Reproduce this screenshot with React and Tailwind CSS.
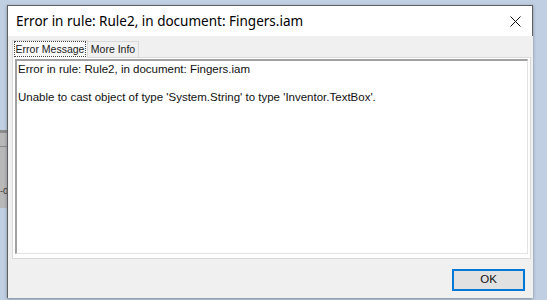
export default function App() {
  return (
    <div className="relative w-[547px] h-[300px] overflow-hidden bg-[#c0cfe2]" style={{ fontFamily: '"Noto Sans", sans-serif' }}>
      {/* background app behind dialog */}
      <div className="absolute left-0 top-[130px] w-[14px] h-[78px] bg-[#b8b8b8] border-t-[3px] border-[#8c8c8c]">
        <div className="mt-[13px] h-px bg-[#8a8a8a]" />
        <div className="mt-[40px] whitespace-nowrap text-[9px] leading-none text-[#333]" style={{ fontFamily: '"Liberation Sans", sans-serif' }}>-0</div>
      </div>
      <div className="absolute left-[7px] top-[5px] w-[526px] h-[293px] flex flex-col shadow-[0_1px_3px_rgba(60,70,90,0.5)]">
        {/* title bar */}
        <div className="h-[31px] w-[526px] bg-white border-l border-t border-r border-[#5f5f5f] flex items-center pl-[8px] pr-[11px]">
          <span className="text-[13.5px] text-black whitespace-nowrap mt-[1px]" style={{ fontFamily: '"Noto Sans", "Open Sans", sans-serif' }}>
            Error in rule: Rule2, in document: Fingers.iam
          </span>
          <svg className="ml-auto mt-[1px]" width="11" height="11" viewBox="0 0 11 11">
            <path d="M0.5 0.5 L10.5 10.5 M10.5 0.5 L0.5 10.5" stroke="#111" strokeWidth="1" fill="none" />
          </svg>
        </div>
        {/* body */}
        <div className="flex-1 bg-[#f0f0f0] border-l border-[#5f5f5f] flex flex-col pl-[4px] pr-[2px]" style={{ fontFamily: '"Liberation Sans", sans-serif' }}>
          <div className="flex items-end h-[18px] mt-[3px]">
            <div className="h-[18px] w-[76px] bg-[#fafafa] border border-b-0 border-[#d9d9d9] flex items-center justify-center relative z-10 -mb-px pb-px">
              <span className="whitespace-nowrap text-[10.5px] text-[#1a1a1a] leading-none w-[72px] text-center py-[2px] border border-dotted border-[#444]">Error Message</span>
            </div>
            <div className="h-[16px] w-[51px] bg-[#f0f0f0] border border-b-0 border-l-0 border-[#d9d9d9] flex items-center justify-center">
              <span className="whitespace-nowrap text-[10.5px] text-[#1a1a1a] leading-none">More Info</span>
            </div>
          </div>
          <div className="w-[519px] h-[202px] bg-white border border-[#d9d9d9] px-[2px] pt-[1px]">
            <div className="w-full h-[195px] bg-white border-t-2 border-l-2 border-t-[#a0a0a0] border-l-[#a0a0a0] border-b border-r border-b-[#e3e3e3] border-r-[#e3e3e3] pl-[1px] pt-[1px]">
              <div className="text-[11.5px] leading-[14px] text-[#111]">
                <div className="whitespace-nowrap">Error in rule: Rule2, in document: Fingers.iam</div>
                <div className="h-[14px]" />
                <div className="whitespace-nowrap">Unable to cast object of type 'System.String' to type 'Inventor.TextBox'.</div>
              </div>
            </div>
          </div>
          <div className="flex justify-end mt-[10px] pr-[6px]">
            <button className="w-[73px] h-[22px] bg-[#e1e1e1] border-2 border-[#0078d7] flex items-center justify-center text-[11.5px] text-[#111]">
              OK
            </button>
          </div>
        </div>
      </div>
    </div>
  );
}
